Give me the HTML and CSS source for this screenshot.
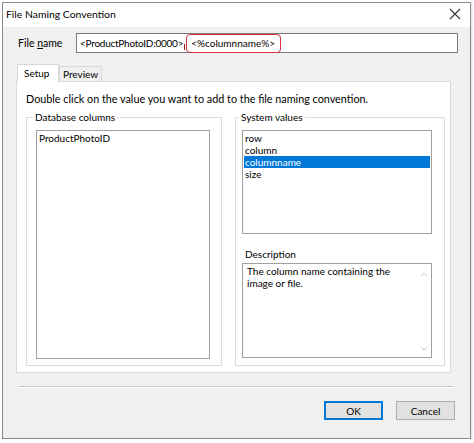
FILE: index.html
```html
<!DOCTYPE html>
<html>
<head>
<meta charset="utf-8">
<link rel="stylesheet" href="styles.css">
</head>
<body>
<div class="window">
  <div class="titlebar">
    <span class="title">File Naming Convention</span>
    <svg class="close" width="12" height="12" viewBox="0 0 12 12"><path d="M1 1 L11 11 M11 1 L1 11" stroke="#333" stroke-width="1.1" fill="none"/></svg>
  </div>
  <div class="content">
    <div class="filerow">
      <span class="flabel">File <u>n</u>ame</span>
      <div class="finput"><span class="ftext">&lt;ProductPhotoID:0000&gt;</span><span class="caret"></span><span class="hl">&lt;%columnname%&gt;</span></div>
    </div>
    <div class="tabs">
      <div class="tab active">Setup</div>
      <div class="tab">Preview</div>
    </div>
    <div class="panel">
      <div class="hint">Double click on the value you want to add to the file naming convention.</div>
      <div class="groups">
        <fieldset class="group left">
          <legend>Database columns</legend>
          <div class="list dbl">
            <div class="item">ProductPhotoID</div>
          </div>
        </fieldset>
        <fieldset class="group right">
          <legend>System values</legend>
          <div class="list sys">
            <div class="item">row</div>
            <div class="item">column</div>
            <div class="item sel">columnname</div>
            <div class="item">size</div>
          </div>
          <div class="dlabel">Description</div>
          <div class="desc">
            <div class="dtext">The column name containing the image or file.</div>
            <div class="sbar">
              <svg width="8" height="5" viewBox="0 0 8 5"><path d="M1 4 L4 1 L7 4" stroke="#c4c4c4" fill="none"/></svg>
              <svg width="8" height="5" viewBox="0 0 8 5"><path d="M1 1 L4 4 L7 1" stroke="#c4c4c4" fill="none"/></svg>
            </div>
          </div>
        </fieldset>
      </div>
    </div>
    <div class="sep"></div>
    <div class="buttons">
      <button class="btn default">OK</button>
      <button class="btn">Cancel</button>
    </div>
  </div>
</div>
</body>
</html>
```
FILE: styles.css
```css
html, body {
  margin: 0;
  padding: 0;
  background: #fff;
}
body {
  font-family: "Segoe UI", Lato, "Noto Sans", sans-serif;
  font-size: 10px;
  color: #000;
}
.window {
  margin: 2px 0 0 2px;
  width: 467px;
  height: 435px;
  border: 1px solid #8a8a8a;
  background: #f0f0f0;
  display: flex;
  flex-direction: column;
  box-shadow: 1px 1px 2px rgba(0,0,0,0.15);
}
.titlebar {
  height: 24px;
  background: #fff;
  display: flex;
  align-items: center;
  padding: 0 9px 3px 3px;
  box-sizing: border-box;
  justify-content: space-between;
  flex: none;
}
.title {
  font-size: 10.4px;
  color: #000;
}
.content {
  padding: 6px 0 0 13px;
  flex: 1;
  display: flex;
  flex-direction: column;
}
.filerow {
  display: flex;
  align-items: center;
  height: 20px;
}
.flabel {
  width: 58px;
  padding-left: 2px;
  font-size: 10.5px;
}
.flabel u { text-decoration: underline; }
.finput {
  width: 377px;
  height: 18px;
  border: 1px solid #7a7a7a;
  background: #fff;
  display: flex;
  align-items: center;
  padding-left: 3px;
  position: relative;
}
.ftext { white-space: nowrap; letter-spacing: -0.25px; }
.caret {
  width: 1px;
  height: 6px;
  background: #a02020;
  align-self: flex-end;
  margin: 0 2px 2px 1px;
}
.hl {
  border: 1.5px solid #d9333c;
  border-radius: 4px;
  height: 19px;
  box-sizing: border-box;
  padding: 0 5px 0 4px;
  display: flex;
  align-items: center;
  margin-left: -1px;
  white-space: nowrap;
}
.tabs {
  display: flex;
  align-items: flex-end;
  margin-top: 11px;
  height: 17px;
  padding-left: 1px;
  position: relative;
  z-index: 1;
}
.tab {
  padding: 0 3px;
  border: 1px solid #d9d9d9;
  border-bottom: none;
  background: #f0f0f0;
  display: flex;
  align-items: center;
  box-sizing: border-box;
  height: 15px;
}
.tab.active {
  background: #fff;
  padding: 0 6px 2px;
  width: 42px;
  margin-bottom: -1px;
  height: 18px;
}
.panel {
  width: 435px;
  height: 292px;
  background: #fff;
  border: 1px solid #d9d9d9;
  box-sizing: border-box;
  padding: 9px 0 0 9px;
}
.hint {
  height: 16px;
  line-height: 15px;
  font-size: 10.8px;
}
.groups {
  display: flex;
  gap: 13px;
  margin-top: 3px;
}
fieldset.group {
  margin: 0;
  border: 1px solid #dcdcdc;
  box-sizing: border-box;
  padding: 0 0 0 9px;
  height: 256px;
}
.group legend {
  padding: 0 2px;
  margin-left: -3px;
  line-height: 14px;
}
.group.left { width: 196px; }
.group.right { width: 210px; padding-left: 6px; }
.list {
  border: 1px solid #a0a0a0;
  background: #fff;
  box-sizing: border-box;
  padding: 1px 1px;
}
.dbl {
  width: 174px;
  height: 229px;
  margin-top: 6px;
}
.sys {
  width: 190px;
  height: 104px;
  margin-top: 6px;
}
.item {
  height: 12px;
  line-height: 12px;
  padding-left: 1px;
}
.item.sel {
  background: #0078d7;
  color: #fff;
}
.dlabel {
  margin-top: 13px;
  height: 16px;
  line-height: 14px;
  padding-left: 3px;
}
.desc {
  width: 190px;
  height: 95px;
  border: 1px solid #a0a0a0;
  box-sizing: border-box;
  display: flex;
  background: #fff;
}
.dtext {
  width: 150px;
  padding: 1px 4px;
  line-height: 12px;
}
.sbar {
  margin-left: auto;
  width: 14px;
  display: flex;
  flex-direction: column;
  justify-content: space-between;
  align-items: center;
  padding: 8px 0 6px;
}
.sep {
  width: 436px;
  height: 1px;
  background: #c8c8c8;
  border-bottom: 1px solid #fff;
  margin-top: 13px;
  margin-left: 2px;
}
.buttons {
  display: flex;
  justify-content: flex-end;
  gap: 13px;
  padding-right: 15px;
  margin-top: 13px;
}
.btn {
  width: 59px;
  height: 19px;
  font: inherit;
  color: #000;
  background: #e1e1e1;
  border: 1px solid #adadad;
  padding: 0;
}
.btn.default {
  border: 2px solid #0078d7;
}
```
